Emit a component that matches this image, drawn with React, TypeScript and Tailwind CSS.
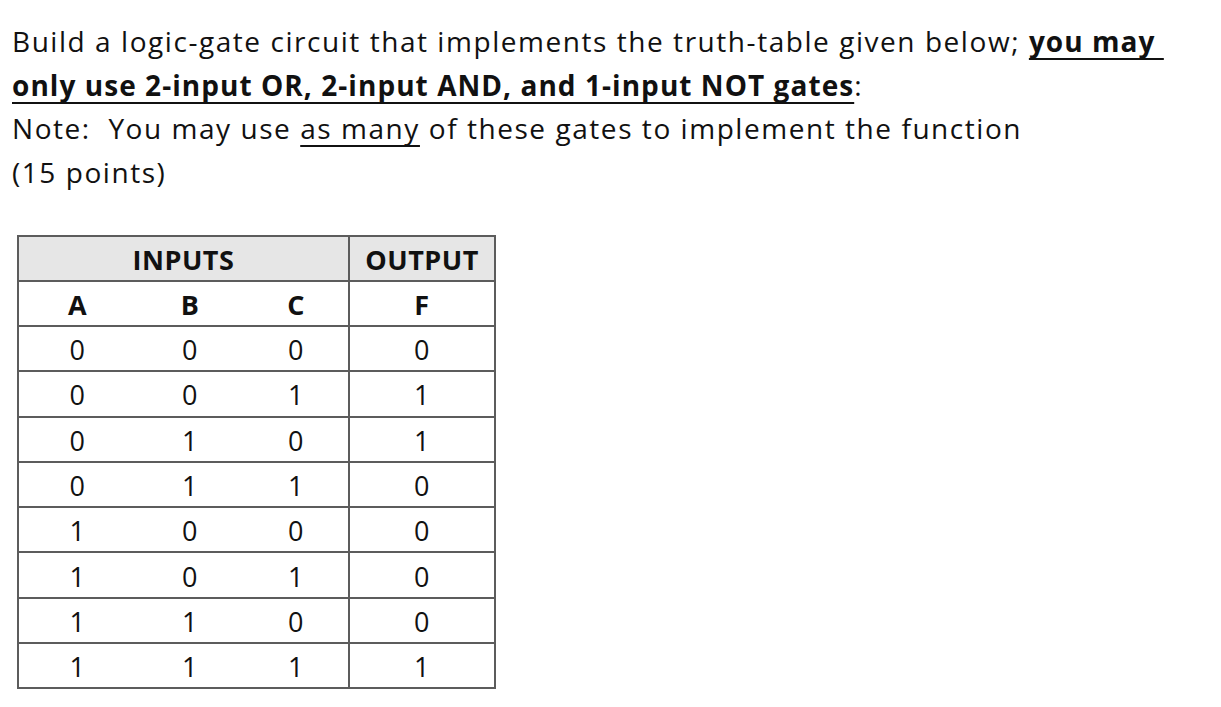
const rows = [
  ["0", "0", "0", "0"],
  ["0", "0", "1", "1"],
  ["0", "1", "0", "1"],
  ["0", "1", "1", "0"],
  ["1", "0", "0", "0"],
  ["1", "0", "1", "0"],
  ["1", "1", "0", "0"],
  ["1", "1", "1", "1"],
];

const App = () => {
  return (
    <div className="min-h-screen bg-white text-[#111] font-['Open_Sans',sans-serif]">
      {/* Question text */}
      <div className="pl-[12px] pt-[20px] whitespace-nowrap text-[28px] leading-[43.5px] tracking-[1.55px] [text-decoration-skip-ink:none]">
        <div>
          Build a logic-gate circuit that implements the truth-table given below;{" "}
          <span className="font-bold tracking-[1.05px] underline decoration-2 underline-offset-[6px]">you may&nbsp;</span>
        </div>
        <div>
          <span className="font-bold tracking-[1.05px] underline decoration-2 underline-offset-[6px]">
            only use 2-input OR, 2-input AND, and 1-input NOT gates
          </span>
          :
        </div>
        <div>
          Note:&nbsp; You may use <span className="underline decoration-[1.5px] underline-offset-[6px]">as many</span> of these gates to implement the function
        </div>
        <div>(15 points)</div>
      </div>

      {/* Truth table */}
      <div className="pl-[17px] pt-[41px]">
        <table className="border-collapse border-2 border-[#5c5c5c] text-center text-[27px] leading-[36px] tracking-[0.5px]">
          <thead>
            <tr className="bg-[#e6e6e6] h-[45px]">
              <th colSpan={3} className="pt-[3px] border-2 border-[#5c5c5c] font-bold">INPUTS</th>
              <th className="pt-[3px] border-2 border-[#5c5c5c] font-bold">OUTPUT</th>
            </tr>
            <tr className="h-[45px]">
              <th className="pt-[3px] w-[118px] border-y-2 border-[#5c5c5c] font-bold">A</th>
              <th className="pt-[3px] w-[108px] border-y-2 border-[#5c5c5c] font-bold">B</th>
              <th className="pt-[3px] w-[105px] border-y-2 border-[#5c5c5c] font-bold">C</th>
              <th className="pt-[3px] w-[146px] border-2 border-[#5c5c5c] font-bold">F</th>
            </tr>
          </thead>
          <tbody>
            {rows.map((r, i) => (
              <tr key={i} className="h-[45.3px]">
                <td className="pt-[3px] border-y-2 border-[#5c5c5c]">{r[0]}</td>
                <td className="pt-[3px] border-y-2 border-[#5c5c5c]">{r[1]}</td>
                <td className="pt-[3px] border-y-2 border-[#5c5c5c]">{r[2]}</td>
                <td className="pt-[3px] border-2 border-[#5c5c5c]">{r[3]}</td>
              </tr>
            ))}
          </tbody>
        </table>
      </div>
    </div>
  );
};

export default App;
